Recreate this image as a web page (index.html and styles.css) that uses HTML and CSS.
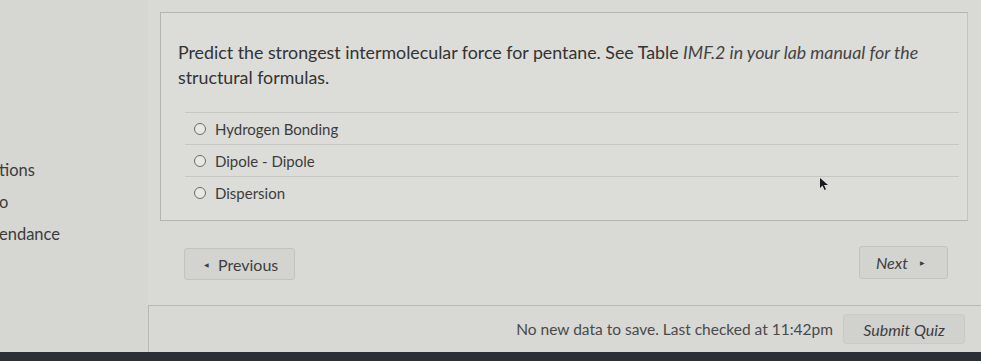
FILE: index.html
```html
<!DOCTYPE html>
<html lang="en">
<head>
    <meta charset="UTF-8">
    <meta name="viewport" content="width=device-width, initial-scale=1.0">
    <title>Quiz</title>
    <link rel="stylesheet" href="styles.css">
</head>
<body>
    <div class="page">
        <div class="sidebar">
            <div class="nav-item nav-first">tions</div>
            <div class="nav-item">o</div>
            <div class="nav-item">endance</div>
        </div>

        <div class="main">
            <div class="quiz-card">
                <div class="question-text">
                    <p>Predict the strongest intermolecular force for pentane. See Table <em>IMF.2 in your lab manual for the</em></p>
                    <p>structural formulas.</p>
                </div>
                <div class="answers">
                    <div class="answer"><span class="radio"></span>Hydrogen Bonding</div>
                    <div class="answer"><span class="radio"></span>Dipole - Dipole</div>
                    <div class="answer"><span class="radio"></span>Dispersion</div>
                </div>
            </div>

            <div class="quiz-nav">
                <button class="btn btn-prev"><span class="arrow">&#9664;</span>Previous</button>
                <button class="btn btn-next">Next<span class="arrow">&#9654;</span></button>
            </div>

            <div class="quiz-footer">
                <span class="save-status">No new data to save. Last checked at 11:42pm</span>
                <button class="btn btn-submit">Submit Quiz</button>
            </div>
        </div>
    </div>
    <div class="taskbar"></div>

    <!-- mouse pointer -->
    <svg class="cursor" width="11" height="14" viewBox="0 0 11 14">
        <path d="M1 1 L1 11 L3.5 8.5 L5.5 13 L7 12.3 L5 8 L9 8 Z" fill="#1a1a1e"/>
    </svg>
</body>
</html>
```

FILE: styles.css
```css
body {
    margin: 0;
    width: 981px;
    height: 361px;
    overflow: hidden;
    position: relative;
    font-family: Lato, "Open Sans", sans-serif;
    background: #d7d7d3;
    color: #3a3a3a;
}

.page {
    display: grid;
    grid-template-columns: 148px 1fr;
    height: 352px;
}

.sidebar {
    background: #d6d6d2;
    font-size: 16.5px;
    color: #3c3c3c;
}

.nav-item {
    height: 32px;
    line-height: 32px;
    margin-left: -1px;
}

.nav-first {
    margin-top: 154px;
}

.main {
    display: flex;
    flex-direction: column;
    background: #d9d9d5;
}

.quiz-card {
    margin: 12px 13px 0 12px;
    height: 209px;
    border: 1px solid #b4b4b0;
    border-right-color: #c4c4c0;
    box-sizing: border-box;
    background: #dcdcd8;
}

.question-text {
    padding: 27px 10px 0 17px;
    font-size: 17.8px;
    line-height: 25px;
    color: #333;
}

.question-text p {
    margin: 0;
    white-space: nowrap;
}

.question-text em {
    font-style: italic;
    color: #444;
}

.answers {
    margin: 22px 8px 0 24px;
}

.answer {
    display: flex;
    align-items: center;
    gap: 9px;
    height: 31px;
    padding-left: 9px;
    border-top: 1px solid #c6c6c2;
    font-size: 15px;
    color: #3c3c3c;
}

.radio {
    width: 10px;
    height: 10px;
    border: 1px solid #6a6a6a;
    border-radius: 50%;
    background: #e8e8e4;
}

.quiz-nav {
    display: flex;
    justify-content: space-between;
    align-items: flex-start;
    margin: 25px 33px 0 36px;
    height: 59px;
}

.btn {
    font-family: Lato, "Open Sans", sans-serif;
    border: 1px solid #c2c2be;
    border-radius: 3px;
    background: #d3d3cf;
    color: #3e3e3e;
    cursor: pointer;
    padding: 0;
}

.btn-prev {
    width: 111px;
    height: 32px;
    margin-top: 2px;
    font-size: 16px;
    display: flex;
    align-items: center;
    padding-left: 19px;
    gap: 9px;
}

.btn-next {
    width: 89px;
    height: 33px;
    font-size: 16px;
    font-style: italic;
    display: flex;
    align-items: center;
    padding-left: 16px;
    gap: 12px;
}

.arrow {
    font-size: 6px;
    font-style: normal;
}

.quiz-footer {
    flex: 1;
    display: flex;
    justify-content: flex-end;
    align-items: center;
    gap: 10px;
    padding-right: 16px;
    border-top: 1px solid #b8b8b4;
    border-left: 1px solid #b8b8b4;
    background: #d8d8d4;
}

.save-status {
    font-size: 15.5px;
    color: #4a4a4a;
}

.btn-submit {
    width: 122px;
    height: 30px;
    font-size: 16px;
    font-style: italic;
    border-color: #c9c9c5;
    background: #d1d1cd;
}

.taskbar {
    height: 9px;
    background: #2a3035;
}

.cursor {
    position: absolute;
    left: 819px;
    top: 177px;
}
```
